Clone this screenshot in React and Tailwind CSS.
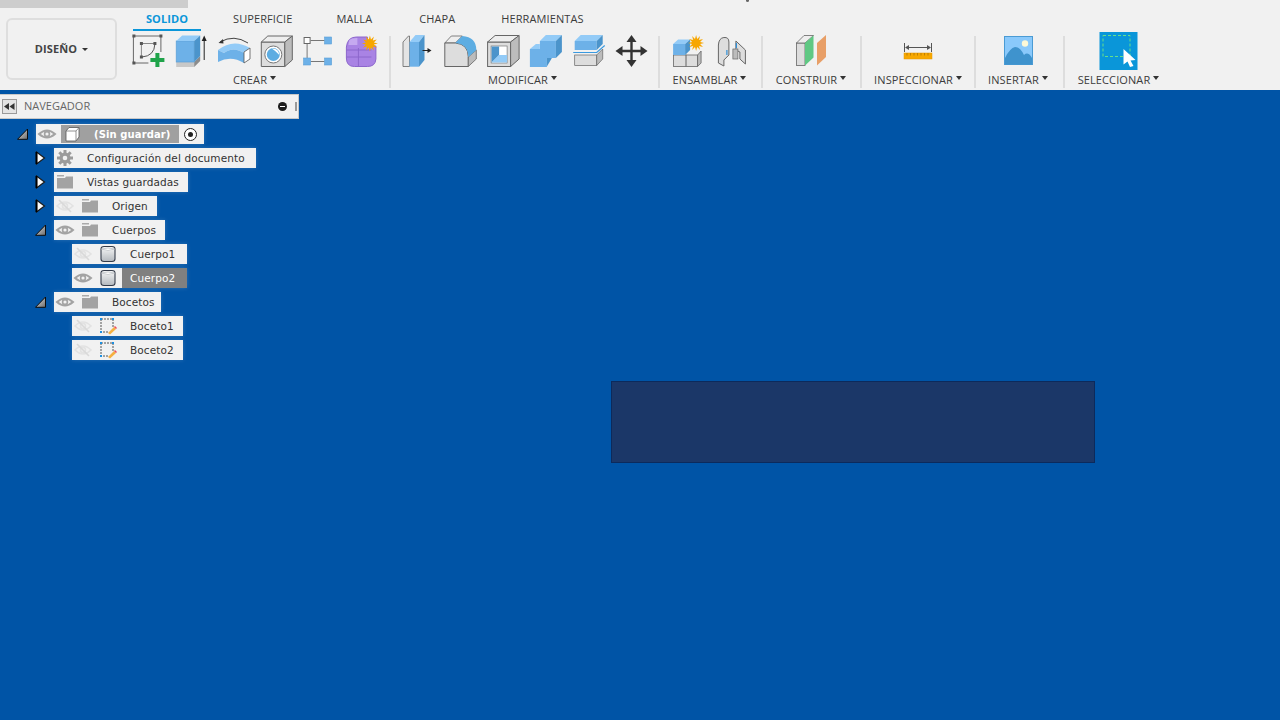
import React from "react";

const Ic = ({ cx, at, children, w = 40 }) => (
  <svg width={w} height="38" viewBox={`${(at ?? cx) - w / 2} 32 ${w} 38`} className="block shrink-0">
    {children}
  </svg>
);

const BL = "#6db1e8", BLL = "#93cbf7", BLD = "#4b94cb", ST = "#666666";

const Star = ({ x, y, r = 8 }) => {
  const pts = [];
  for (let i = 0; i < 24; i++) {
    const a = (i * Math.PI) / 12;
    const rad = i % 2 === 0 ? r : r * 0.52;
    pts.push(`${(x + rad * Math.cos(a)).toFixed(1)},${(y + rad * Math.sin(a)).toFixed(1)}`);
  }
  return <polygon points={pts.join(" ")} fill="#f7a600" />;
};

const Handle = ({ x, y, c = "#555555", s = 3 }) => <rect x={x - s / 2} y={y - s / 2} width={s} height={s} fill={c} />;

const SketchNew = () => (
  <Ic cx={147.6}>
    <path d="M133 36H160.5V52M133 36V63H148" fill="none" stroke={ST} strokeWidth="1" />
    <path d="M141 57V43.5H155" fill="none" stroke="#888888" />
    <path d="M154.5 44Q154 56 141.5 57" fill="none" stroke="#555555" />
    <Handle x={133.5} y={36} /><Handle x={160.5} y={36} /><Handle x={133.5} y={63} />
    <Handle x={141} y={43.5} /><Handle x={154.5} y={43.5} /><Handle x={141} y={57} />
    <rect x={155} y={53} width={4} height={14} fill="#1fa34a" />
    <rect x={150} y={58} width={14} height={4} fill="#1fa34a" />
  </Ic>
);
const Extrude = () => (
  <Ic cx={190.8}>
    <polygon points="176,62 194,62 194,67 176,67" fill="#c8c8c8" />
    <polygon points="194,62 200,56 200,61 194,67" fill="#8c8c8c" />
    <rect x="176" y="41" width="18" height="21" fill={BL} stroke="#5a9fd6" strokeWidth=".7" />
    <polygon points="176,41 182,35.5 200,35.5 194,41" fill={BLL} />
    <polygon points="194,41 200,35.5 200,56 194,62" fill={BLD} />
    <path d="M204 60V39" stroke="#222222" strokeWidth="1" />
    <polygon points="204,35.5 206.5,41 201.5,41" fill="#222222" />
  </Ic>
);
const Revolve = () => (
  <Ic cx={234}>
    <path d="M220 42Q234 34 248 43" fill="none" stroke="#444444" />
    <polygon points="218.5,43 223,39 223.5,43.5" fill="#333333" />
    <path d="M218 50Q233 38 250 48L244 53Q233 46 224 53Z" fill={BLL} />
    <path d="M218 50L224 53Q233 46 244 53V63Q231 55 218 62Z" fill={BL} />
    <polygon points="244,52 250,48 250,59 244,63" fill="#ffffff" stroke="#555555" strokeWidth=".8" />
  </Ic>
);
const Hole = () => (
  <Ic cx={277.2}>
    <polygon points="261.5,42 285,42 285,66.5 261.5,66.5" fill="#dddddd" stroke={ST} />
    <polygon points="261.5,42 268,36 292.5,36 285,42" fill="#eeeeee" stroke={ST} />
    <polygon points="285,42 292.5,36 292.5,60 285,66.5" fill="#bcbcbc" stroke={ST} />
    <circle cx="273.5" cy="54.5" r="8.5" fill="#ffffff" stroke="#777777" />
    <circle cx="273.5" cy="54.5" r="6.5" fill="#5dade2" />
    <path d="M272 48.5Q279 48 279.5 55Q276 51 272 48.5Z" fill="#ffffff" />
  </Ic>
);
const Constraint = () => (
  <Ic cx={320.4}>
    <path d="M311 40.5H325M307.5 44V58M311 61.5H325" stroke="#777777" />
    <rect x="304.5" y="37.5" width="6" height="6" fill="#ffffff" stroke="#666666" />
    <rect x="325" y="37" width="7" height="7" fill={BL} stroke="#5a9fd6" strokeWidth=".6" />
    <rect x="304" y="58" width="7" height="7" fill={BL} stroke="#5a9fd6" strokeWidth=".6" />
    <rect x="325" y="58" width="7" height="7" fill={BL} stroke="#5a9fd6" strokeWidth=".6" />
  </Ic>
);
const Form = () => (
  <Ic cx={363.6}>
    <path d="M347 47Q348 37 357 37H368V46H376.5V59Q376 66.5 368 66.5H355Q347 66.5 347 58Z" fill="#a983e4" stroke="#8c66cc" />
    <path d="M347 50H372M359 48V66M347 57H372" stroke="#8c66cc" fill="none" />
    <path d="M350 40Q352 38 358 38V45H349Z" fill="#c5a9f0" />
    <Star x={370.5} y={43.5} />
  </Ic>
);
const PressPull = () => (
  <Ic cx={415.5}>
    <polygon points="402.5,42 408,36 409,36 409,66.5 402.5,66.5" fill="#e4e4e4" stroke={ST} strokeWidth=".8" />
    <rect x="409" y="42" width="9.5" height="24.7" fill={BL} />
    <polygon points="409,42 415,35 424,35 418.5,42" fill={BLL} />
    <polygon points="418.5,42 424,35 424,60 418.5,66.7" fill={BLD} />
    <path d="M422 50.5H428" stroke="#222222" />
    <polygon points="431,50.5 427,48 427,53" fill="#222222" />
  </Ic>
);
const Fillet = () => (
  <Ic cx={458.7}>
    <path d="M444.5 43L451 36H462L455 43Z" fill="#eeeeee" stroke={ST} strokeWidth=".8" />
    <path d="M444.5 43H455Q468 44 468 57V66.5H444.5Z" fill="#dddddd" stroke={ST} />
    <path d="M468 57L476 50V59L468 66.5Z" fill="#bcbcbc" stroke={ST} strokeWidth=".8" />
    <path d="M455 43L462 36Q476 37 476 50L468 57Q468 44 455 43Z" fill="#5dade2" />
  </Ic>
);
const Shell = () => (
  <Ic cx={501.9}>
    <rect x="487.5" y="42" width="23" height="24.5" fill="#dddddd" stroke={ST} />
    <polygon points="487.5,42 495,35.5 519,35.5 510.5,42" fill="#eeeeee" stroke={ST} />
    <polygon points="510.5,42 519,35.5 519,59 510.5,66.5" fill="#bcbcbc" stroke={ST} />
    <rect x="491" y="46" width="16" height="17" fill="#ffffff" stroke="#777777" strokeWidth=".7" />
    <polygon points="491.5,46.5 499,46.5 499,55 491.5,62.5" fill={BLD} />
    <polygon points="491.5,62.5 499,55 507,55 507,62.5" fill={BLL} />
  </Ic>
);
const Combine = () => (
  <Ic cx={545.1}>
    <rect x="540" y="41" width="16" height="17" fill={BL} />
    <polygon points="540,41 546,35 562,35 556,41" fill={BLL} />
    <polygon points="556,41 562,35 562,52 556,58" fill={BLD} />
    <rect x="530" y="49" width="17" height="18" fill={BL} />
    <polygon points="530,49 536,44 540,44 540,49" fill={BLL} />
    <polygon points="547,58 552,58 547,66.5" fill={BLD} />
  </Ic>
);
const Split = () => (
  <Ic cx={588.3}>
    <rect x="575" y="41" width="22" height="9" fill={BL} />
    <polygon points="575,41 581,35 603,35 597,41" fill={BLL} />
    <polygon points="597,41 603,35 603,44 597,50" fill={BLD} />
    <rect x="575" y="55" width="22" height="10.5" fill="#dddddd" stroke={ST} strokeWidth=".7" />
    <polygon points="597,55 603,49 603,59 597,65.5" fill="#bcbcbc" stroke={ST} strokeWidth=".7" />
    <path d="M573.5 52.5H597L605 45.5" fill="none" stroke="#3a9ae0" strokeWidth="1.2" />
  </Ic>
);
const Move = () => (
  <Ic cx={631.5}>
    <path d="M620 51H644M632 39V63" stroke="#333333" strokeWidth="2.4" />
    <polygon points="632,35 637,42 627,42" fill="#333333" />
    <polygon points="632,67 637,60 627,60" fill="#333333" />
    <polygon points="616,51 623,46 623,56" fill="#333333" />
    <polygon points="648,51 641,46 641,56" fill="#333333" />
  </Ic>
);
const Assemble = () => (
  <Ic cx={687.9}>
    <rect x="673.5" y="55" width="12.5" height="11.5" fill="#dddddd" stroke={ST} strokeWidth=".8" />
    <rect x="686" y="55" width="11.5" height="11.5" fill="#dddddd" stroke={ST} strokeWidth=".8" />
    <polygon points="697.5,55 701,51 701,63 697.5,66.5" fill="#bcbcbc" stroke={ST} strokeWidth=".8" />
    <rect x="673" y="44" width="12" height="11" fill={BL} />
    <polygon points="673,44 678,39.5 690,39.5 685,44" fill={BLL} />
    <polygon points="685,44 690,39.5 690,50 685,55" fill={BLD} />
    <Star x={696} y={43} />
  </Ic>
);
const Joint = () => (
  <Ic cx={731.1}>
    <path d="M718.5 45Q719 38 724 37.5Q729 37 729 42V55L724 60V66L718.5 63Z" fill="#dddddd" stroke={ST} />
    <path d="M736 41L745.5 50V64L740 59V52L736 50Z" fill="#dddddd" stroke={ST} />
    <rect x="733" y="49" width="5" height="10" fill="#bcbcbc" stroke={ST} strokeWidth=".7" />
    <path d="M727 50V55M736.5 43V48" stroke="#2f8fd8" strokeWidth="1.2" />
  </Ic>
);
const Construct = () => (
  <Ic cx={811}>
    <rect x="796.5" y="43" width="8.5" height="22.5" fill="#dddddd" stroke={ST} strokeWidth=".8" />
    <polygon points="796.5,43 804,35.5 813.5,35.5 805,43" fill="#eeeeee" stroke={ST} strokeWidth=".8" />
    <polygon points="805,43 813.5,35.5 813.5,57.5 805,65.5" fill="#5fc883" />
    <polygon points="817,43 826,35 826,57 817,65.5" fill="#e89f67" />
  </Ic>
);
const Inspect = () => (
  <Ic cx={918}>
    <path d="M904.5 43V52M931.5 43V52M907 47.5H929" stroke="#555555" />
    <polygon points="905,47.5 909,45 909,50" fill="#555555" />
    <polygon points="931,47.5 927,45 927,50" fill="#555555" />
    <rect x="904" y="53" width="28" height="6" fill="#f7a800" stroke="#e59800" strokeWidth=".5" />
    <path d="M907 53V55.5M910.5 53V55.5M914 53V55.5M917.5 53V55.5M921 53V55.5M924.5 53V55.5M928 53V55.5" stroke="#a86f00" strokeWidth=".7" />
  </Ic>
);
const Insert = () => (
  <Ic cx={1018}>
    <rect x="1004.5" y="36.5" width="28" height="28" fill="#8ac9fb" stroke="#4a9bd4" />
    <circle cx="1025" cy="43.5" r="3.2" fill="#fdf9d8" />
    <path d="M1005 58Q1010 48 1015 47Q1020 47 1024 55Q1028 51 1032 58V64.5H1005Z" fill="#3f93cd" />
  </Ic>
);
const Select = () => (
  <Ic cx={1118.5}>
    <rect x="1099" y="32" width="38" height="38" fill="#0a96d9" />
    <rect x="1102.5" y="35.5" width="27" height="21" fill="none" stroke="#66e08a" strokeDasharray="3 2" />
    <polygon points="1123,49 1135,60 1130,60.5 1133,66 1129.5,67 1127,61.5 1123,64.5" fill="#ffffff" />
  </Ic>
);

const Label = ({ children }) => (
  <div className="flex items-center justify-center gap-[3px] text-[11px] leading-none tracking-[0.1px] text-[#3c3c3c] h-3 whitespace-nowrap">
    <span>{children}</span>
    <span className="w-0 h-0 border-l-[3px] border-r-[3px] border-t-[4px] border-l-transparent border-r-transparent border-t-[#333333] mb-[2px]" />
  </div>
);

const Group = ({ w, label, children, border = true, pad = "", labelPad = "" }) => (
  <div className={`flex flex-col ${w} ${border ? "border-r-2 border-[#dddddd]" : ""} h-[52px]`}>
    <div className={`flex justify-center h-[38px] -mt-[4px] ${pad}`}>{children}</div>
    <div className={`mt-[3px] ${pad} ${labelPad}`}><Label>{label}</Label></div>
  </div>
);

const Cell = ({ children }) => <div className="w-[43.2px] flex justify-center">{children}</div>;

const Eye = ({ off }) => (
  <svg width="22" height="20" viewBox="0 0 22 20" className="shrink-0">
    {off ? (
      <g fill="none" stroke="#e2e2e2" strokeWidth="1.6">
        <path d="M3 10Q11 2 19 10Q11 18 3 10Z" />
        <circle cx="11" cy="10" r="2.5" />
        <path d="M5 4L17 16" stroke="#d9d9d9" />
      </g>
    ) : (
      <g fill="none" stroke="#a3a3a3">
        <path d="M3 10Q11 3 19 10Q11 17 3 10Z" strokeWidth="2" />
        <circle cx="11" cy="10" r="2.4" strokeWidth="1.6" />
      </g>
    )}
  </svg>
);
const Folder = () => (
  <svg width="18" height="20" viewBox="0 0 18 20" className="shrink-0">
    <path d="M1 3H8V4.5H1Z" fill="#aaaaaa" />
    <path d="M1 6H9L10 4.5H17V16.5H1Z" fill="#a3a3a3" />
  </svg>
);
const Gear = () => (
  <svg width="18" height="20" viewBox="0 0 18 20" className="shrink-0">
    <g stroke="#9b9b9b" strokeWidth="3">
      <path d="M9 2V18M1 10H17M3.3 4.3L14.7 15.7M14.7 4.3L3.3 15.7" />
    </g>
    <circle cx="9" cy="10" r="5.5" fill="#9b9b9b" />
    <circle cx="9" cy="10" r="2.3" fill="#f1f1f1" />
  </svg>
);
const Cyl = () => (
  <svg width="18" height="20" viewBox="0 0 18 20" className="shrink-0">
    <defs>
      <linearGradient id="cg" x1="0" y1="0" x2="0" y2="1">
        <stop offset="0" stopColor="#f8f8f8" />
        <stop offset="1" stopColor="#b4b9be" />
      </linearGradient>
    </defs>
    <path d="M2 5Q2 2.5 5 2.5H13Q16 2.5 16 5V15Q16 17.5 13 17.5H5Q2 17.5 2 15Z" fill="url(#cg)" stroke="#353c4a" strokeWidth="1.1" />
    <path d="M2.5 5Q9 8 15.5 5Q9 3 2.5 5Z" fill="#ffffff" stroke="#b8bcc0" strokeWidth=".7" />
  </svg>
);
const SketchSm = () => (
  <svg width="18" height="20" viewBox="0 0 18 20" className="shrink-0">
    <path d="M2 3H14V11M2 3V16H9" fill="none" stroke="#555555" strokeDasharray="2 1" />
    <rect x="1" y="2" width="2" height="2" fill="#1c8fe0" />
    <rect x="13" y="2" width="2" height="2" fill="#1c8fe0" />
    <rect x="1" y="15" width="2" height="2" fill="#1c8fe0" />
    <path d="M9 17L15 11L17 13L11 18.5Z" fill="#f5b041" />
    <path d="M15 11L16 10L18 12L17 13Z" fill="#ef4b5c" />
  </svg>
);
const CubeIcon = () => (
  <svg width="16" height="16" viewBox="0 0 16 16" className="shrink-0">
    <polygon points="2,5 5,1.5 15,1.5 15,11 12,15 2,15" fill="#ffffff" stroke="#555555" strokeWidth=".8" />
    <path d="M2 5H12V15M12 5L15 1.5" fill="none" stroke="#777777" strokeWidth=".8" />
  </svg>
);

const TriOpen = () => (
  <svg width="11" height="12" viewBox="0 0 11 12">
    <defs>
      <linearGradient id="tg" x1="0" y1="0" x2="1" y2="1">
        <stop offset="0" stopColor="#e4e4e4" />
        <stop offset="1" stopColor="#6a6a6a" />
      </linearGradient>
    </defs>
    <polygon points="0.5,11.3 10.5,11.3 10.5,1" fill="url(#tg)" stroke="#0c0c0c" strokeWidth="1" />
  </svg>
);
const TriClosed = () => (
  <svg width="11" height="14" viewBox="0 0 11 14">
    <polygon points="1.5,1 9.5,7 1.5,13" fill="#fafafa" stroke="#1a1a1a" strokeWidth="1.2" />
    <path d="M1.5 1V13" stroke="#000000" strokeWidth="2" />
  </svg>
);

const Row = ({ depth = 1, toggle, children }) => (
  <div className="flex items-center h-5">
    <div
      className={`flex justify-end shrink-0 ${depth === 0 ? "w-9 pr-2" : depth === 1 ? "w-[54px] pr-2" : "w-[72px]"}`}
    >
      {toggle === "open" && <TriOpen />}
      {toggle === "closed" && <TriClosed />}
    </div>
    <div className="flex items-center h-5 bg-[#f1f1f1] shadow-[0_0_4px_rgba(255,255,255,0.18)]">{children}</div>
  </div>
);

const Txt = ({ children, cls = "pr-[9px]" }) => (
  <span className={`ml-[13px] pt-[1px] text-[#333333] whitespace-nowrap ${cls}`}>{children}</span>
);

export default function App() {
  return (
    <div
      className="w-[1280px] h-[720px] overflow-hidden flex flex-col bg-[#0054a6] relative"
      style={{ fontFamily: '"Open Sans", "Liberation Sans", sans-serif' }}
    >
      <header className="h-[90px] shrink-0 bg-[#f1f1f1] relative">
        <div className="w-[188px] h-2 bg-[#cdcdcd]" />
        <span className="absolute left-[746px] top-0 w-[3px] h-[2px] rounded-b-sm bg-[#666666]" />
        <div className="flex">
          <button className="ml-[6px] mt-[10px] w-[111px] h-[62px] rounded-md border-2 border-[#dedede] bg-[#f1f1f1] flex items-center justify-center gap-[5px] text-[11px] tracking-[0.1px] font-bold text-[#444444]">
            DISEÑO
            <span className="w-0 h-0 border-l-[3px] border-r-[3px] border-t-[3px] border-l-transparent border-r-transparent border-t-[#333333]" />
          </button>
          <div className="ml-[9px] flex flex-col">
            <nav className="flex h-[23px] ml-[7px] text-[11px] tracking-[0.1px] text-[#3c3c3c]">
              <div className="w-[68px] h-[23px] pt-[2px] border-b-[2px] border-[#0a96d9] text-[#0a96d9] font-bold flex items-center justify-center">SOLIDO</div>
              <div className="ml-[32px] pt-[1px] flex items-center h-[22px]">SUPERFICIE</div>
              <div className="ml-[44px] pt-[1px] flex items-center h-[22px]">MALLA</div>
              <div className="ml-[47px] pt-[1px] flex items-center h-[22px]">CHAPA</div>
              <div className="ml-[46px] pt-[1px] flex items-center h-[22px]">HERRAMIENTAS</div>
            </nav>
            <div className="flex mt-[5px]">
              <Group w="w-[265px]" label="CREAR" pad="pr-[4px]" labelPad="pr-[6px]">
                <Cell><SketchNew /></Cell><Cell><Extrude /></Cell><Cell><Revolve /></Cell>
                <Cell><Hole /></Cell><Cell><Constraint /></Cell><Cell><Form /></Cell>
              </Group>
              <Group w="w-[269px]" label="MODIFICAR" pad="pr-[2px]" labelPad="pr-[4px]">
                <Cell><PressPull /></Cell><Cell><Fillet /></Cell><Cell><Shell /></Cell>
                <Cell><Combine /></Cell><Cell><Split /></Cell><Cell><Move /></Cell>
              </Group>
              <Group w="w-[103px]" label="ENSAMBLAR" pad="pr-[2px]">
                <Cell><Assemble /></Cell><Cell><Joint /></Cell>
              </Group>
              <Group w="w-[99px]" label="CONSTRUIR" pad="pr-[1px]"><Construct /></Group>
              <Group w="w-[114px]" label="INSPECCIONAR"><Inspect /></Group>
              <Group w="w-[89px]" label="INSERTAR" pad="pr-[3px]"><Insert /></Group>
              <Group w="w-[107px]" label="SELECCIONAR" border={false}><Select /></Group>
            </div>
          </div>
        </div>
      </header>

      <main className="flex-1 relative">
        <section className="mt-1 w-[299px] h-[25px] bg-[#f1f1f1] border-y border-r border-[#c8c8c8] flex items-center text-[11px] text-[#666666]">
          <span className="ml-[2px] w-[15px] h-[15px] border border-[#9a9a9a] bg-[#e4e4e4] flex items-center justify-center">
            <svg width="11" height="7" viewBox="0 0 11 7">
              <polygon points="0,3.5 5,0 5,7" fill="#333333" />
              <polygon points="5.5,3.5 10.5,0 10.5,7" fill="#333333" />
            </svg>
          </span>
          <span className="ml-[7px]">NAVEGADOR</span>
          <span className="ml-auto w-[9px] h-[9px] rounded-full bg-[#1d1d1d] flex items-center justify-center">
            <span className="w-[5px] h-px bg-white" />
          </span>
          <span className="ml-[8px] mr-[1px] w-[2px] h-[9px] border-x border-[#9a9a9a]" />
        </section>

        <div
          className="mt-[5px] flex flex-col gap-1 text-[10.5px] leading-none tracking-[0.1px]"
          style={{ fontFamily: '"DejaVu Sans", sans-serif' }}
        >
          <Row depth={0} toggle="open">
            <Eye />
            <div className="ml-[3px] w-[118px] h-[18px] bg-[#a0a0a0] flex items-center pl-[3px]">
              <CubeIcon />
              <span className="ml-[14px] pt-[1px] text-[10px] text-white font-bold whitespace-nowrap">(Sin guardar)</span>
            </div>
            <div className="w-[22px] flex justify-center">
              <span className="w-[13px] h-[13px] rounded-full border border-[#222222] bg-white flex items-center justify-center">
                <span className="w-[5px] h-[5px] rounded-full bg-[#222222]" />
              </span>
            </div>
            <span className="w-[3px]" />
          </Row>
          <Row toggle="closed">
            <span className="ml-[2px]"><Gear /></span><Txt cls="pr-[11px]">Configuración del documento</Txt>
          </Row>
          <Row toggle="closed">
            <span className="ml-[2px]"><Folder /></span><Txt cls="pr-[9px]">Vistas guardadas</Txt>
          </Row>
          <Row toggle="closed">
            <Eye off /><span className="ml-[5px]"><Folder /></span><Txt>Origen</Txt>
          </Row>
          <Row toggle="open">
            <Eye /><span className="ml-[5px]"><Folder /></span><Txt>Cuerpos</Txt>
          </Row>
          <Row depth={2}>
            <Eye off /><span className="ml-[5px]"><Cyl /></span><Txt cls="pr-[12px]">Cuerpo1</Txt>
          </Row>
          <Row depth={2}>
            <Eye /><span className="ml-[5px]"><Cyl /></span>
            <span className="ml-[5px] h-5 pt-[1px] bg-[#808080] text-white flex items-center pl-2 pr-[12px] whitespace-nowrap">Cuerpo2</span>
          </Row>
          <Row toggle="open">
            <Eye /><span className="ml-[5px]"><Folder /></span><Txt cls="pr-[6px]">Bocetos</Txt>
          </Row>
          <Row depth={2}>
            <Eye off /><span className="ml-[5px]"><SketchSm /></span><Txt cls="pr-[9px]">Boceto1</Txt>
          </Row>
          <Row depth={2}>
            <Eye off /><span className="ml-[5px]"><SketchSm /></span><Txt cls="pr-[9px]">Boceto2</Txt>
          </Row>
        </div>

        <div className="absolute left-[611px] top-[291px] w-[484px] h-[82px] bg-[#1b3768] border border-[#0c2a5c]" />
      </main>
    </div>
  );
}
